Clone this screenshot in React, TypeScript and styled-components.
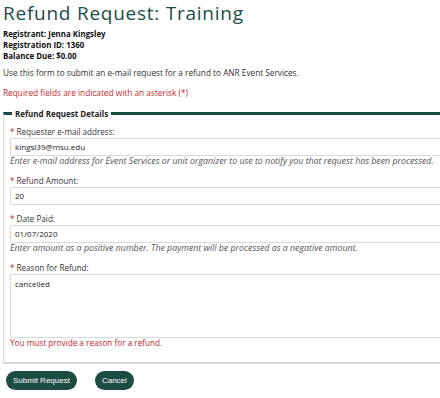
import styled, { createGlobalStyle } from 'styled-components'

const GlobalStyle = createGlobalStyle`
  html, body {
    margin: 0;
    padding: 0;
    background: #ffffff;
  }
  body {
    font-family: 'Open Sans', 'Liberation Sans', sans-serif;
    color: #222222;
    overflow: hidden;
  }
`

const fields = [
  {
    label: 'Requester e-mail address:',
    value: 'kingsl39@msu.edu',
    help: 'Enter e-mail address for Event Services or unit organizer to use to notify you that request has been processed.',
  },
  { label: 'Refund Amount:', value: '20' },
  {
    label: 'Date Paid:',
    value: '01/07/2020',
    help: 'Enter amount as a positive number. The payment will be processed as a negative amount.',
  },
]

const App = () => {
  return (
    <Page>
      <GlobalStyle />
      <Title>Refund Request: Training</Title>
      <Summary>
        <div>Registrant: Jenna Kingsley</div>
        <div>Registration ID: 1360</div>
        <div>Balance Due: $0.00</div>
      </Summary>
      <Intro>Use this form to submit an e-mail request for a refund to ANR Event Services.</Intro>
      <Required>Required fields are indicated with an asterisk (*)</Required>

      <Fieldset>
        <Legend>Refund Request Details</Legend>
        {fields.map((f) => (
          <Field key={f.label}>
            <Label>
              <Star>*</Star> {f.label}
            </Label>
            <Input>{f.value}</Input>
            {f.help && <Help>{f.help}</Help>}
          </Field>
        ))}
        <Field>
          <Label>
            <Star>*</Star> Reason for Refund:
          </Label>
          <TextArea>cancelled</TextArea>
          <ErrorText>You must provide a reason for a refund.</ErrorText>
        </Field>
      </Fieldset>

      <Actions>
        <Button>Submit Request</Button>
        <Button>Cancel</Button>
      </Actions>
    </Page>
  )
}

export default App

const Page = styled.div`
  width: 460px;
  padding: 0 0 0 3px;
`

const Title = styled.h1`
  margin: 0;
  font-size: 19px;
  font-weight: 400;
  line-height: 26px;
  letter-spacing: 0.75px;
  color: #1d4c45;
`

const Summary = styled.div`
  margin-top: 3px;
  font-size: 7.9px;
  font-weight: 700;
  line-height: 11px;
  color: #111111;
`

const Intro = styled.p`
  margin: 5px 0 0;
  font-size: 8.25px;
  line-height: 11px;
  color: #333333;
`

const Required = styled.p`
  margin: 9px 0 0;
  font-size: 8.3px;
  line-height: 11px;
  color: #c0272d;
`

const Fieldset = styled.fieldset`
  margin: 10px 0 0;
  padding: 6px 0 14px 6px;
  border: none;
  border-top: 3px solid #1d4c43;
  border-left: 1px solid #d7dbd9;
  border-bottom: 2px solid #d7dbd9;
  min-width: 0;
`

const Legend = styled.legend`
  margin-left: 2px;
  padding: 0 3px;
  font-size: 8px;
  line-height: 11px;
  font-weight: 700;
  color: #222222;
`

const Field = styled.div`
  margin-top: 8px;
  &:first-of-type {
    margin-top: 1px;
  }
`

const Label = styled.div`
  font-size: 8.1px;
  line-height: 11px;
  color: #333333;
  margin-bottom: 1px;
`

const Star = styled.span`
  color: #c0272d;
`

const Input = styled.div`
  height: 18px;
  box-sizing: border-box;
  border: 1px solid #d9dcdb;
  border-right: none;
  border-radius: 2px 0 0 2px;
  padding: 0 4px;
  font-size: 8px;
  line-height: 16px;
  color: #222222;
`

const TextArea = styled(Input)`
  height: 64px;
  padding-top: 3px;
  line-height: 11px;
`

const Help = styled.div`
  font-size: 8.8px;
  font-style: italic;
  line-height: 11px;
  color: #555555;
  white-space: nowrap;
`

const ErrorText = styled.div`
  margin-top: -1px;
  font-size: 8.2px;
  line-height: 11px;
  color: #c0272d;
`

const Actions = styled.div`
  display: flex;
  gap: 18px;
  margin-top: 7px;
  padding-left: 3px;
`

const Button = styled.button`
  height: 19px;
  padding: 0 7px;
  border: none;
  border-radius: 10px;
  background: #1d4c43;
  color: #ffffff;
  font-family: 'Liberation Sans', sans-serif;
  font-size: 8px;
  font-weight: 400;
`
